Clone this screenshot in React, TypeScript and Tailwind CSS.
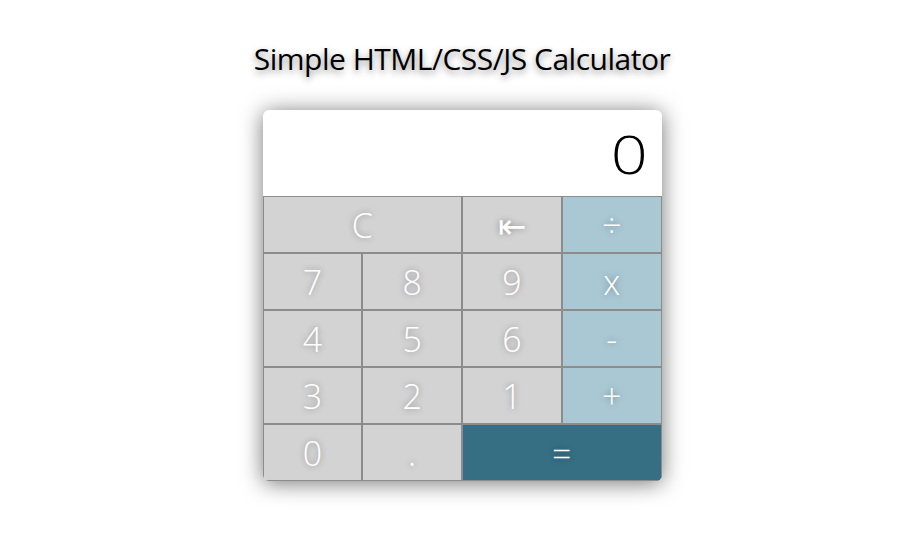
const keys: { label: string; kind: "num" | "op" | "eq"; span?: string }[] = [
    { label: "C", kind: "num", span: "col-span-2" },
    { label: "⇤", kind: "num" },
    { label: "÷", kind: "op" },
    { label: "7", kind: "num" },
    { label: "8", kind: "num" },
    { label: "9", kind: "num" },
    { label: "x", kind: "op" },
    { label: "4", kind: "num" },
    { label: "5", kind: "num" },
    { label: "6", kind: "num" },
    { label: "-", kind: "op" },
    { label: "3", kind: "num" },
    { label: "2", kind: "num" },
    { label: "1", kind: "num" },
    { label: "+", kind: "op" },
    { label: "0", kind: "num" },
    { label: ".", kind: "num" },
    { label: "=", kind: "eq", span: "col-span-2" },
];

const kindClass = {
    num: "bg-[#d3d3d3]",
    op: "bg-[#a9c8d4]",
    eq: "bg-[#366e84]",
};

const App = () => {
    return (
        <div className="min-h-[536px] w-full bg-white flex flex-col items-center pl-[13px] font-['Open_Sans',sans-serif]">
            <h1 className="mt-[38px] text-[30px] leading-[42px] tracking-[-0.5px] text-black [text-shadow:0_3px_7px_rgba(0,0,0,0.45)]">
                Simple HTML/CSS/JS Calculator
            </h1>
            <div className="mt-[30px] w-[399px] rounded-[6px] overflow-hidden bg-white shadow-[0_2px_22px_rgba(0,0,0,0.55)]">
                <div className="h-[86px] flex items-center justify-end px-[14px]">
                    <span className="text-[54px] font-light text-black leading-none scale-x-[1.2] origin-right">0</span>
                </div>
                <div className="grid grid-cols-4">
                    {keys.map((k) => (
                        <button
                            key={k.label}
                            className={`${kindClass[k.kind]} ${k.span ?? ""} h-[57px] border border-[#8c8c8c] flex items-center justify-center text-white font-light text-[34px] leading-none [text-shadow:0_0_6px_rgba(0,0,0,0.35)]`}
                        >
                            {k.label}
                        </button>
                    ))}
                </div>
            </div>
        </div>
    );
};

export default App;
